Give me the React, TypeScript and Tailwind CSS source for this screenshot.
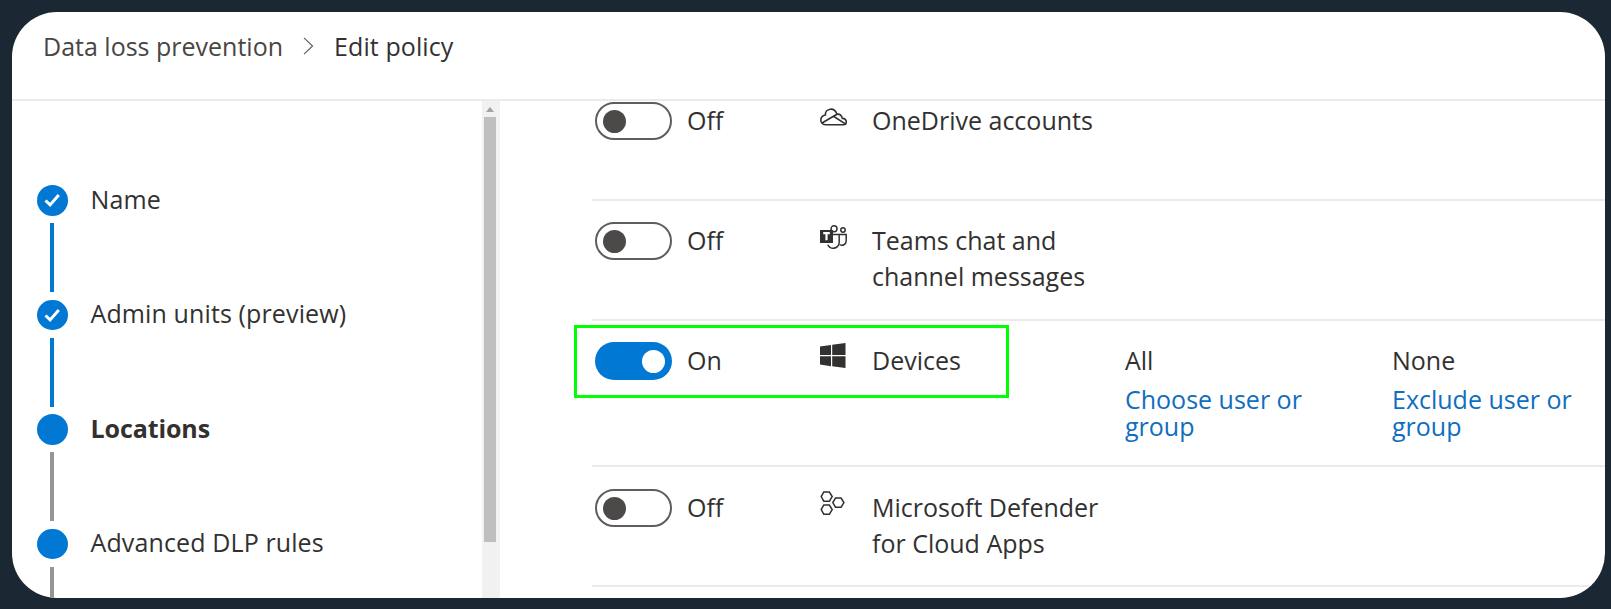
const font = "font-['Open_Sans',sans-serif]";

function Check() {
  return (
    <svg viewBox="0 0 30 30" className="h-[30px] w-[30px]">
      <path d="M8.5 15.5l4.6 4.4L21.8 10" fill="none" stroke="#fff" strokeWidth="3" />
    </svg>
  );
}

function StepDot({ done }: { done?: boolean }) {
  return (
    <div className="flex h-[30.5px] w-[30.5px] shrink-0 items-center justify-center rounded-full bg-[#0078d4]">
      {done && <Check />}
    </div>
  );
}

const steps = [
  { label: "Name", done: true, line: "bg-[#0078d4]" },
  { label: "Admin units (preview)", done: true, line: "bg-[#0078d4]" },
  { label: "Locations", bold: true, line: "bg-[#979593]" },
  { label: "Advanced DLP rules", line: "bg-[#979593]" },
];

function Sidebar() {
  return (
    <div className="flex w-[470px] shrink-0 flex-col pl-[25px] pt-[84px]">
      {steps.map((s) => (
        <div key={s.label} className="flex flex-col">
          <div className="flex h-[30.5px] items-center gap-[23px]">
            <StepDot done={s.done} />
            <span
              className={
                s.bold
                  ? "pb-[2px] font-bold tracking-[-0.1px] text-[#323130]"
                  : "pb-[2px] tracking-[0.12px] text-[#323130]"
              }
            >
              {s.label}
            </span>
          </div>
          <div className={`my-[7.5px] ml-[13px] h-[69px] w-[4px] shrink-0 ${s.line}`} />
        </div>
      ))}
    </div>
  );
}

function Scrollbar() {
  return (
    <div className="flex w-[18px] shrink-0 flex-col bg-[#f1f1f1] pl-[2px] pr-[4px]">
      <div className="flex h-[16px] items-center justify-center">
        <div className="h-0 w-0 border-x-[4px] border-b-[5px] border-x-transparent border-b-[#a3a3a3]" />
      </div>
      <div className="h-[425px] bg-[#bfbfbf]" />
    </div>
  );
}

function Toggle({ on }: { on?: boolean }) {
  return (
    <div className="flex items-center gap-[15px]">
      {on ? (
        <div className="flex h-[38px] w-[77px] items-center justify-end rounded-full bg-[#0078d4] pr-[7px]">
          <div className="h-[23px] w-[23px] rounded-full bg-white" />
        </div>
      ) : (
        <div className="flex h-[38px] w-[77px] items-center rounded-full border-2 border-[#605e5c] pl-[6px]">
          <div className="h-[23px] w-[23px] rounded-full bg-[#4b4a49]" />
        </div>
      )}
      <span className="text-[#323130]">{on ? "On" : "Off"}</span>
    </div>
  );
}

function OneDriveIcon() {
  return (
    <svg viewBox="0 0 27 18" className="h-[18px] w-[27px]" fill="none" stroke="#323130" strokeWidth="1.6">
      <path d="M6 16.8h17.5c2 0 2.8-1.4 2.8-2.8 0-2-1.5-3.7-3.9-3.6C21.6 6.8 19 5.6 17 6.3 15.8 2.5 12.6 1 10.2 1.2 7.2 1.5 5.2 4 5.4 7 2.6 7.6.8 9.6.8 12.3c0 2.5 2.2 4.5 5.2 4.5z" />
      <path d="M1.6 15.2L13.5 8.3l11.8 7.6M17 6.3l-3.5 2" />
    </svg>
  );
}

function TeamsIcon() {
  return (
    <svg viewBox="0 0 27 24" className="h-[24px] w-[27px]" fill="none" stroke="#323130" strokeWidth="1.5">
      <circle cx="14" cy="3.8" r="3" />
      <circle cx="23" cy="5" r="2.2" />
      <path d="M10 9.5h9.2v8a6 6 0 0 1-6 5.8 6 6 0 0 1-5.4-3.6" />
      <path d="M19.5 9.5h6.7v6.6a4.2 4.2 0 0 1-6.6 3.4" />
      <rect x="0" y="5" width="13" height="13" fill="#323130" stroke="none" />
      <path d="M3.2 8.2h6.6M6.5 8.2v7" stroke="#fff" strokeWidth="2.2" />
    </svg>
  );
}

function WindowsIcon() {
  return (
    <svg viewBox="0 0 26 25" className="h-[25px] w-[26px]" fill="#323130">
      <path d="M0 3.5l11-1.6v10H0zM12.2 1.7L25.5 0v11.9H12.2zM0 13.2h11v10L0 21.6zM12.2 13.2h13.3V25l-13.3-1.7z" />
    </svg>
  );
}

function DefenderIcon() {
  return (
    <svg viewBox="0 0 25 25" className="h-[25px] w-[25px]" fill="none" stroke="#323130" strokeWidth="1.5">
      <path d="M3.8 1h5.6l2.8 4.6-2.8 4.6H3.8L1.2 5.6z" />
      <path d="M15.5 7h5.6l2.8 4.6-2.8 4.6h-5.6l-2.7-4.6z" />
      <path d="M3.8 14h5.6l2.8 4.6-2.8 4.6H3.8L1.2 18.6z" />
    </svg>
  );
}

function Row({
  on,
  icon,
  iconTop,
  lines,
  className,
  children,
}: {
  on?: boolean;
  icon: React.ReactNode;
  iconTop: string;
  lines: string[];
  className: string;
  children?: React.ReactNode;
}) {
  return (
    <div className={`flex shrink-0 border-b-2 border-[#edebe9] pl-[3px] ${className}`}>
      <div className="w-[225px] shrink-0">
        <Toggle on={on} />
      </div>
      <div className={`w-[52px] shrink-0 ${iconTop}`}>{icon}</div>
      <div className="w-[253px] shrink-0 leading-[36px] text-[#323130]">
        {lines.map((l) => (
          <div key={l}>{l}</div>
        ))}
      </div>
      {children}
    </div>
  );
}

function Scope({ value, link }: { value: string; link: string }) {
  return (
    <div className="w-[267px] shrink-0 text-[#323130]">
      <div className="leading-[36px]">{value}</div>
      <a className="mt-[8px] block w-[200px] leading-[27px] text-[#106ebe]">{link}</a>
    </div>
  );
}

export default function App() {
  return (
    <div className={`h-[609px] w-[1611px] overflow-hidden bg-[#1b2733] pb-[11px] pl-[12px] pr-[6px] pt-[12px] text-[25px] ${font}`}>
      <div className="relative flex h-full flex-col overflow-hidden rounded-[45px] bg-white">
        <div className="flex h-[89px] shrink-0 items-start gap-[20px] border-b-2 border-[#edebe9] pl-[31px] pt-[16px]">
          <span className="text-[#484644]">Data loss prevention</span>
          <svg viewBox="0 0 12 20" className="mt-[9px] h-[18px] w-[11px]" fill="none" stroke="#605e5c" strokeWidth="1.3">
            <path d="M1 1l9.5 9L1 19" />
          </svg>
          <span className="tracking-[0.1px] text-[#323130]">Edit policy</span>
        </div>

        <div className="flex min-h-0 flex-1">
          <Sidebar />
          <Scrollbar />
          <div className="flex min-w-0 flex-1 flex-col pl-[92px]">
            <Row
              icon={<OneDriveIcon />}
              iconTop="pt-[6px]"
              lines={["OneDrive accounts"]}
              className="h-[100px] pt-[1px]"
            />
            <Row
              icon={<TeamsIcon />}
              iconTop="pt-[3px]"
              lines={["Teams chat and", "channel messages"]}
              className="h-[120px] pt-[21px]"
            />
            <Row
              on
              icon={<WindowsIcon />}
              iconTop="pt-[1px]"
              lines={["Devices"]}
              className="h-[146px] pt-[21px]"
            >
              <Scope value="All" link="Choose user or group" />
              <Scope value="None" link="Exclude user or group" />
            </Row>
            <Row
              icon={<DefenderIcon />}
              iconTop="pt-[2px]"
              lines={["Microsoft Defender", "for Cloud Apps"]}
              className="h-[120px] pt-[22px]"
            />
          </div>
        </div>

        {/* green highlight drawn on top of the Devices row */}
        <div className="absolute left-[562px] top-[313px] h-[73px] w-[435px] border-[3px] border-[#00ff00]" />
      </div>
    </div>
  );
}
